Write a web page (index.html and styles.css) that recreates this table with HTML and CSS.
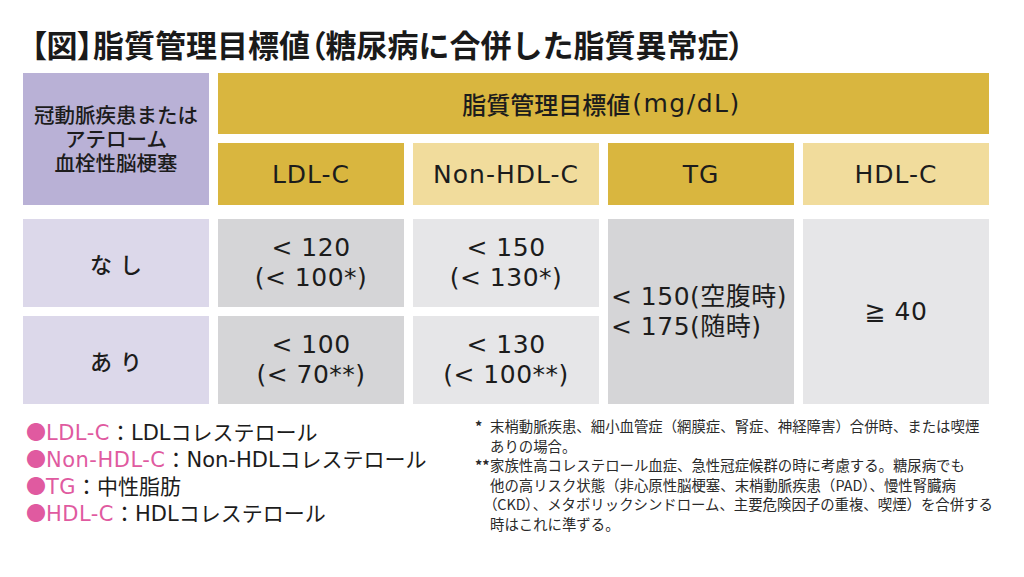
FILE: index.html
```html
<!DOCTYPE html>
<html lang="ja">
<head>
<meta charset="utf-8">
<title>脂質管理目標値</title>
<link rel="stylesheet" href="styles.css">
</head>
<body>
<div class="page">
  <h1 class="title"><span class="br">【</span>図<span class="br">】</span>脂質管理目標値<span class="br">（</span>糖尿病に合併した脂質異常症<span class="br">）</span></h1>

  <div class="grid head">
    <div class="cell purple span2 small">冠動脈疾患または<br>アテローム<br>血栓性脳梗塞</div>
    <div class="cell gold span4 main">脂質管理目標値<span class="unit">(mg/dL)</span></div>
    <div class="cell gold lat">LDL-C</div>
    <div class="cell pale lat">Non-HDL-C</div>
    <div class="cell gold lat">TG</div>
    <div class="cell pale lat">HDL-C</div>
  </div>

  <div class="grid body">
    <div class="cell lilac kana">なし</div>
    <div class="cell grey num">&lt; 120<br>(&lt; 100*)</div>
    <div class="cell light num">&lt; 150<br>(&lt; 130*)</div>
    <div class="cell grey num span2"><div class="left">&lt; 150(空腹時)<br>&lt; 175(随時)</div></div>
    <div class="cell light num span2">≧ 40</div>
    <div class="cell lilac kana">あり</div>
    <div class="cell grey num">&lt; 100<br>(&lt; 70**)</div>
    <div class="cell light num">&lt; 130<br>(&lt; 100**)</div>
  </div>

  <div class="notes">
    <ul class="legend">
      <li><span class="pink"><span class="dot">●</span>LDL-C</span>：LDLコレステロール</li>
      <li><span class="pink"><span class="dot">●</span>Non-HDL-C</span>：Non-HDLコレステロール</li>
      <li><span class="pink"><span class="dot">●</span>TG</span>：中性脂肪</li>
      <li><span class="pink"><span class="dot">●</span>HDL-C</span>：HDLコレステロール</li>
    </ul>
    <div class="foot">
      <div class="fn"><span class="mark">*</span><span class="txt">末梢動脈疾患、細小血管症（網膜症、腎症、神経障害）合併時、または喫煙<br>ありの場合。</span></div>
      <div class="fn"><span class="mark">**</span><span class="txt">家族性高コレステロール血症、急性冠症候群の時に考慮する。糖尿病でも<br>他の高リスク状態（非心原性脳梗塞、末梢動脈疾患（PAD）、慢性腎臓病<br><span class="br">（</span>CKD<span class="br">）</span>、メタボリックシンドローム、主要危険因子の重複、喫煙）を合併する<br>時はこれに準ずる。</span></div>
    </div>
  </div>
</div>
</body>
</html>
```
FILE: styles.css
```css
* { box-sizing: border-box; }
html, body { margin: 0; padding: 0; background: #ffffff; }
body {
  font-family: "DejaVu Sans", "Noto Sans CJK JP", sans-serif;
  color: #1c1c1c;
  width: 1024px;
  height: 577px;
  overflow: hidden;
}
.page { padding: 0 0 0 23px; }
.title {
  margin: 0;
  padding: 26px 0 0 8px;
  font-family: "Noto Sans CJK JP", sans-serif;
  font-weight: 700;
  font-size: 31px;
  line-height: 36px;
  color: #1a1a1a;
  white-space: nowrap;
}
.br { font-feature-settings: "palt"; }
.grid {
  display: grid;
  grid-template-columns: repeat(5, 186px);
  column-gap: 9px;
  row-gap: 9px;
}
.head { margin-top: 11px; grid-template-rows: 61px 62px; }
.body { margin-top: 14px; grid-template-rows: 88px 88px; }
.cell {
  display: flex;
  align-items: center;
  justify-content: center;
  text-align: center;
}
.span2 { grid-row: span 2; }
.span4 { grid-column: span 4; }
.purple { background: #b9b1d6; }
.gold { background: #d9b63f; }
.pale { background: #f1dc9c; }
.lilac { background: #dcd8ea; }
.grey { background: #d5d5d7; }
.light { background: #e6e6e8; }
.small {
  font-family: "Noto Sans CJK JP", sans-serif;
  font-size: 20.5px;
  line-height: 24px;
  font-weight: 500;
  padding-bottom: 2px;
}
.main {
  font-family: "Noto Sans CJK JP", sans-serif;
  font-size: 24px;
  font-weight: 500;
  padding-right: 4px;
}
.unit {
  font-family: "DejaVu Sans", sans-serif;
  font-weight: 400;
  font-size: 25px;
  letter-spacing: 1.5px;
  margin-left: 2px;
}
.lat { font-size: 25px; letter-spacing: 1px; }
.kana {
  font-family: "Noto Sans CJK JP", sans-serif;
  font-size: 22px;
  font-weight: 500;
  letter-spacing: 8px;
  padding-left: 8px;
}
.num {
  font-size: 25px;
  line-height: 30px;
  letter-spacing: 0.5px;
}
.left { text-align: left; padding-right: 4px; }
.notes {
  display: flex;
  margin-top: 15px;
}
.legend {
  list-style: none;
  margin: 0;
  padding: 0 0 0 3px;
  width: 452px;
  font-family: "DejaVu Sans", "Noto Sans CJK JP", sans-serif;
  font-size: 21px;
  line-height: 26px;
  font-weight: 400;
}
.legend li { white-space: nowrap; }
.pink { color: #e05aa0; letter-spacing: 0.5px; }
.dot { font-family: "Noto Sans CJK JP", sans-serif; font-size: 20px; letter-spacing: 0; }
.foot {
  margin-top: -3px;
  font-family: "Noto Sans CJK JP", sans-serif;
  font-size: 14.4px;
  line-height: 19.5px;
  color: #2a2a2a;
}
.fn { display: flex; white-space: nowrap; }
.mark { width: 15px; flex: none; font-weight: 700; }
```
